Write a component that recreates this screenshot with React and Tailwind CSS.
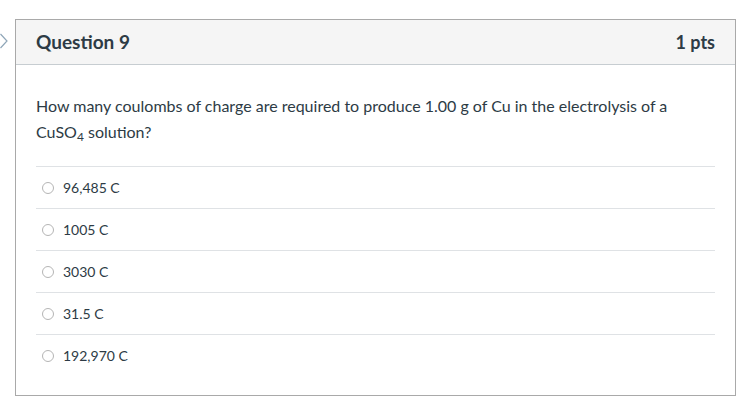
import React from 'react';

const ANSWERS = ['96,485 C', '1005 C', '3030 C', '31.5 C', '192,970 C'];

const App = () => {
  return (
    <div className="relative w-[747px] h-[410px] bg-white text-[#2d3b45]" style={{ fontFamily: 'Lato, "Liberation Sans", sans-serif' }}>
      {/* collapse chevron peeking in from the left */}
      <svg className="absolute left-0 top-[33px]" width="8" height="16" viewBox="0 0 8 16" fill="none">
        <path d="M0.5 1 L7 8 L0.5 15" stroke="#8fa6b8" strokeWidth="1.2" />
      </svg>

      <div className="pt-[19px] pl-[15px]">
        <div className="w-[721px] border border-[#a9a9a9]">
          <div className="h-[45px] bg-[#f5f5f5] border-b border-[#c7cdd1] flex items-center justify-between px-[20px]">
            <span className="text-[19px] font-bold">Question 9</span>
            <span className="text-[18px] font-bold">1 pts</span>
          </div>

          <div className="px-[20px] pt-[28px] pb-[19px]">
            <p className="text-[16px] leading-[26px] text-[#2d3b45]">
              How many coulombs of charge are required to produce 1.00 g of Cu in the electrolysis of a CuSO<span className="text-[12px] leading-none align-[-3px]">4</span> solution?
            </p>

            <div className="mt-[21px]">
              {ANSWERS.map((a) => (
                <div key={a} className="h-[42px] border-t border-[#dfe2e5] flex items-center pl-[6px]">
                  <span className="w-[12px] h-[12px] rounded-full border border-[#b5b5b5] bg-white" />
                  <span className="ml-[9px] text-[14px]">{a}</span>
                </div>
              ))}
            </div>
          </div>
        </div>
      </div>
    </div>
  );
};

export default App;
